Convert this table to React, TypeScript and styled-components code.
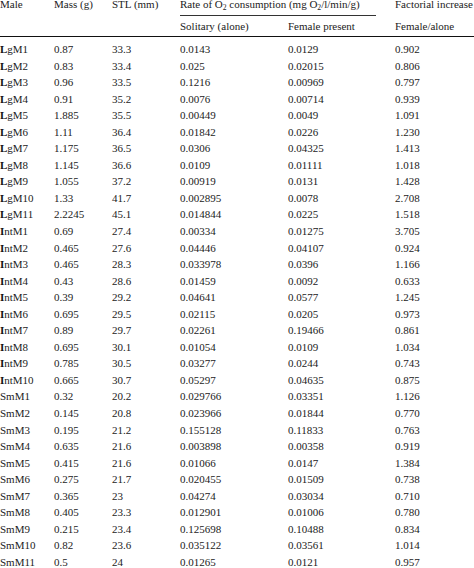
import React from "react";
import styled, { createGlobalStyle } from "styled-components";

const GlobalStyle = createGlobalStyle`
  html, body {
    margin: 0;
    padding: 0;
    background: #ffffff;
  }
`;

const COLS = "54px 58px 68px 108px 107px 120px";

const Page = styled.div`
  width: 474px;
  height: 568px;
  overflow: hidden;
  font-family: "Liberation Serif", "Times New Roman", serif;
  font-size: 11px;
  color: #222;
  white-space: nowrap;
`;

const HeadTop = styled.div`
  display: grid;
  grid-template-columns: ${COLS};
  height: 16px;
  line-height: 8px;
`;

const HeadSub = styled.div`
  display: grid;
  grid-template-columns: ${COLS};
  padding: 2px 0 1.5px;
  line-height: 16.5px;
  border-bottom: 1.5px solid #111;
`;

const Cell = styled.div<{ $start?: number }>`
  grid-column-start: ${(p) => p.$start ?? "auto"};
`;

const Spanner = styled.div`
  grid-column: 4 / span 2;
  margin-right: 19px;
  height: 16px;
  box-sizing: border-box;
  border-bottom: 1px solid #333;
`;

const Sub = styled.sub`
  font-size: 0.7em;
  vertical-align: -0.3em;
  line-height: 0;
`;

const Body = styled.div`
  padding-top: 4px;
`;

const Row = styled.div`
  display: grid;
  grid-template-columns: ${COLS};
  line-height: 16.55px;
`;

const Initial = styled.span`
  font-weight: 700;
  color: #111;
`;

type Entry = [string, string, string, string, string, string];

const rows: Entry[] = [
  ["LgM1", "0.87", "33.3", "0.0143", "0.0129", "0.902"],
  ["LgM2", "0.83", "33.4", "0.025", "0.02015", "0.806"],
  ["LgM3", "0.96", "33.5", "0.1216", "0.00969", "0.797"],
  ["LgM4", "0.91", "35.2", "0.0076", "0.00714", "0.939"],
  ["LgM5", "1.885", "35.5", "0.00449", "0.0049", "1.091"],
  ["LgM6", "1.11", "36.4", "0.01842", "0.0226", "1.230"],
  ["LgM7", "1.175", "36.5", "0.0306", "0.04325", "1.413"],
  ["LgM8", "1.145", "36.6", "0.0109", "0.01111", "1.018"],
  ["LgM9", "1.055", "37.2", "0.00919", "0.0131", "1.428"],
  ["LgM10", "1.33", "41.7", "0.002895", "0.0078", "2.708"],
  ["LgM11", "2.2245", "45.1", "0.014844", "0.0225", "1.518"],
  ["IntM1", "0.69", "27.4", "0.00334", "0.01275", "3.705"],
  ["IntM2", "0.465", "27.6", "0.04446", "0.04107", "0.924"],
  ["IntM3", "0.465", "28.3", "0.033978", "0.0396", "1.166"],
  ["IntM4", "0.43", "28.6", "0.01459", "0.0092", "0.633"],
  ["IntM5", "0.39", "29.2", "0.04641", "0.0577", "1.245"],
  ["IntM6", "0.695", "29.5", "0.02115", "0.0205", "0.973"],
  ["IntM7", "0.89", "29.7", "0.02261", "0.19466", "0.861"],
  ["IntM8", "0.695", "30.1", "0.01054", "0.0109", "1.034"],
  ["IntM9", "0.785", "30.5", "0.03277", "0.0244", "0.743"],
  ["IntM10", "0.665", "30.7", "0.05297", "0.04635", "0.875"],
  ["SmM1", "0.32", "20.2", "0.029766", "0.03351", "1.126"],
  ["SmM2", "0.145", "20.8", "0.023966", "0.01844", "0.770"],
  ["SmM3", "0.195", "21.2", "0.155128", "0.11833", "0.763"],
  ["SmM4", "0.635", "21.6", "0.003898", "0.00358", "0.919"],
  ["SmM5", "0.415", "21.6", "0.01066", "0.0147", "1.384"],
  ["SmM6", "0.275", "21.7", "0.020455", "0.01509", "0.738"],
  ["SmM7", "0.365", "23", "0.04274", "0.03034", "0.710"],
  ["SmM8", "0.405", "23.3", "0.012901", "0.01006", "0.780"],
  ["SmM9", "0.215", "23.4", "0.125698", "0.10488", "0.834"],
  ["SmM10", "0.82", "23.6", "0.035122", "0.03561", "1.014"],
  ["SmM11", "0.5", "24", "0.01265", "0.0121", "0.957"],
];

// the Lg and Int labels show a heavier first letter in the source
const MaleLabel = ({ name }: { name: string }) =>
  name.startsWith("Sm") ? (
    <>{name}</>
  ) : (
    <>
      <Initial>{name[0]}</Initial>
      {name.slice(1)}
    </>
  );

export default function App() {
  return (
    <Page>
      <GlobalStyle />
      <HeadTop>
        <Cell>Male</Cell>
        <Cell>Mass (g)</Cell>
        <Cell>STL (mm)</Cell>
        <Spanner>
          Rate of O<Sub>2</Sub> consumption (mg O<Sub>2</Sub>/l/min/g)
        </Spanner>
        <Cell>Factorial increase</Cell>
      </HeadTop>
      <HeadSub>
        <Cell $start={4}>Solitary (alone)</Cell>
        <Cell>Female present</Cell>
        <Cell>Female/alone</Cell>
      </HeadSub>
      <Body>
        {rows.map(([male, mass, stl, alone, female, ratio]) => (
          <Row key={male}>
            <Cell>
              <MaleLabel name={male} />
            </Cell>
            <Cell>{mass}</Cell>
            <Cell>{stl}</Cell>
            <Cell>{alone}</Cell>
            <Cell>{female}</Cell>
            <Cell>{ratio}</Cell>
          </Row>
        ))}
      </Body>
    </Page>
  );
}
